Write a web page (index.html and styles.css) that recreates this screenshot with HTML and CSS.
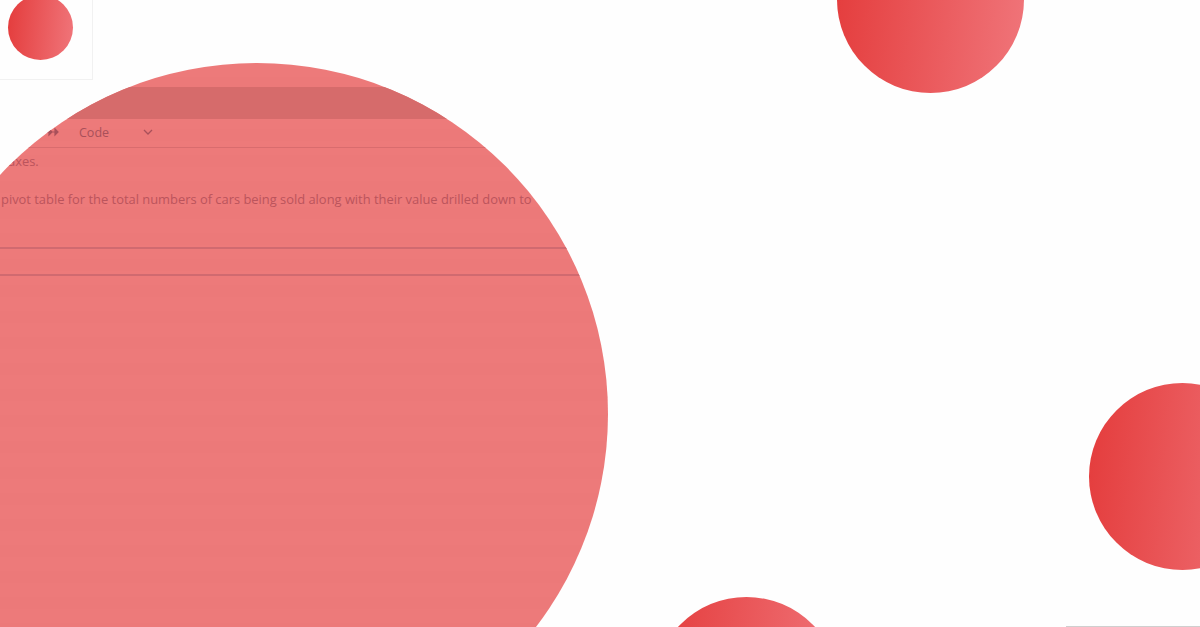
FILE: index.html
```html
<!DOCTYPE html>
<html lang="en">
<head>
<meta charset="utf-8">
<title>Pivot table</title>
<link rel="stylesheet" href="styles.css">
</head>
<body>
<div class="stage">
  <div class="thumb"><div class="dot dot-small"></div></div>
  <div class="dot dot-top"></div>
  <div class="dot dot-right"></div>
  <div class="dot dot-bottom"></div>
  <div class="corner-line"></div>
  <div class="lens">
    <div class="lens-inner">
      <div class="band"></div>
      <div class="toolbar">
        <svg class="tool-icon" viewBox="0 0 16 10" width="16" height="10" aria-hidden="true"><path d="M2 5h8M4 2l3 3-3 3zM10 2l3 3-3 3z" fill="#a9505a" stroke="#a9505a" stroke-width="1.2"/></svg>
        <span class="cell-type">Code</span>
        <svg class="chevron" viewBox="0 0 10 6" width="10" height="6" aria-hidden="true"><path d="M1 1l4 4 4-4" fill="none" stroke="#a9505a" stroke-width="1.3"/></svg>
      </div>
      <p class="line-axes">axes.</p>
      <p class="line-pivot">pivot table for the total numbers of cars being sold along with their value drilled down to</p>
      <div class="cell-rule cell-rule-first"></div>
      <div class="cell-rule cell-rule-second"></div>
    </div>
  </div>
</div>
</body>
</html>
```
FILE: styles.css
```css
html, body {
  margin: 0;
  padding: 0;
  background: #fff;
}
.stage {
  position: relative;
  width: 1200px;
  height: 627px;
  overflow: hidden;
  background: #fefefe;
  font-family: "Open Sans", "Noto Sans", sans-serif;
}
.thumb {
  position: absolute;
  left: 0;
  top: 0;
  width: 92px;
  height: 79px;
  border-right: 1px solid #f1f1f1;
  border-bottom: 1px solid #f1f1f1;
}
.dot {
  position: absolute;
  width: 187px;
  height: 187px;
  border-radius: 50%;
  background: linear-gradient(95deg, #e43c3c 0%, #f0757a 100%);
}
.dot-small {
  left: 8px;
  top: -5px;
  width: 65px;
  height: 65px;
}
.dot-top {
  left: 837px;
  top: -94px;
}
.dot-right {
  left: 1089px;
  top: 383px;
}
.dot-bottom {
  left: 653px;
  top: 597px;
}
.corner-line {
  position: absolute;
  left: 1066px;
  right: 0;
  bottom: 0;
  height: 1px;
  background: #cfcfcf;
}
.lens {
  position: absolute;
  left: -94px;
  top: 63px;
  width: 702px;
  height: 702px;
  border-radius: 50%;
  overflow: hidden;
  background: repeating-linear-gradient(180deg, #ed7a7a 0, #ed7a7a 14px, #ec7979 14px, #ec7979 26px);
}
.lens-inner {
  display: flex;
  flex-direction: column;
  padding-top: 24px;
  color: #bb545c;
  font-size: 12.9px;
}
.band {
  height: 32px;
  background: #d66b6b;
}
.toolbar {
  display: flex;
  align-items: center;
  height: 26px;
  padding: 0 0 2px 139px;
  border-bottom: 1px solid #d96c6e;
}
.tool-icon {
  flex: none;
}
.cell-type {
  margin-left: 18px;
  width: 64px;
  color: #a9505a;
  font-size: 12.5px;
}
.chevron {
  flex: none;
}
.line-axes {
  margin: 5px 0 0 102px;
  line-height: 17px;
}
.line-pivot {
  margin: 21px 0 0 95px;
  line-height: 17px;
  white-space: nowrap;
}
.cell-rule {
  height: 2px;
  background: #d06a70;
}
.cell-rule-first {
  margin-top: 39px;
}
.cell-rule-second {
  margin-top: 25px;
}
```
